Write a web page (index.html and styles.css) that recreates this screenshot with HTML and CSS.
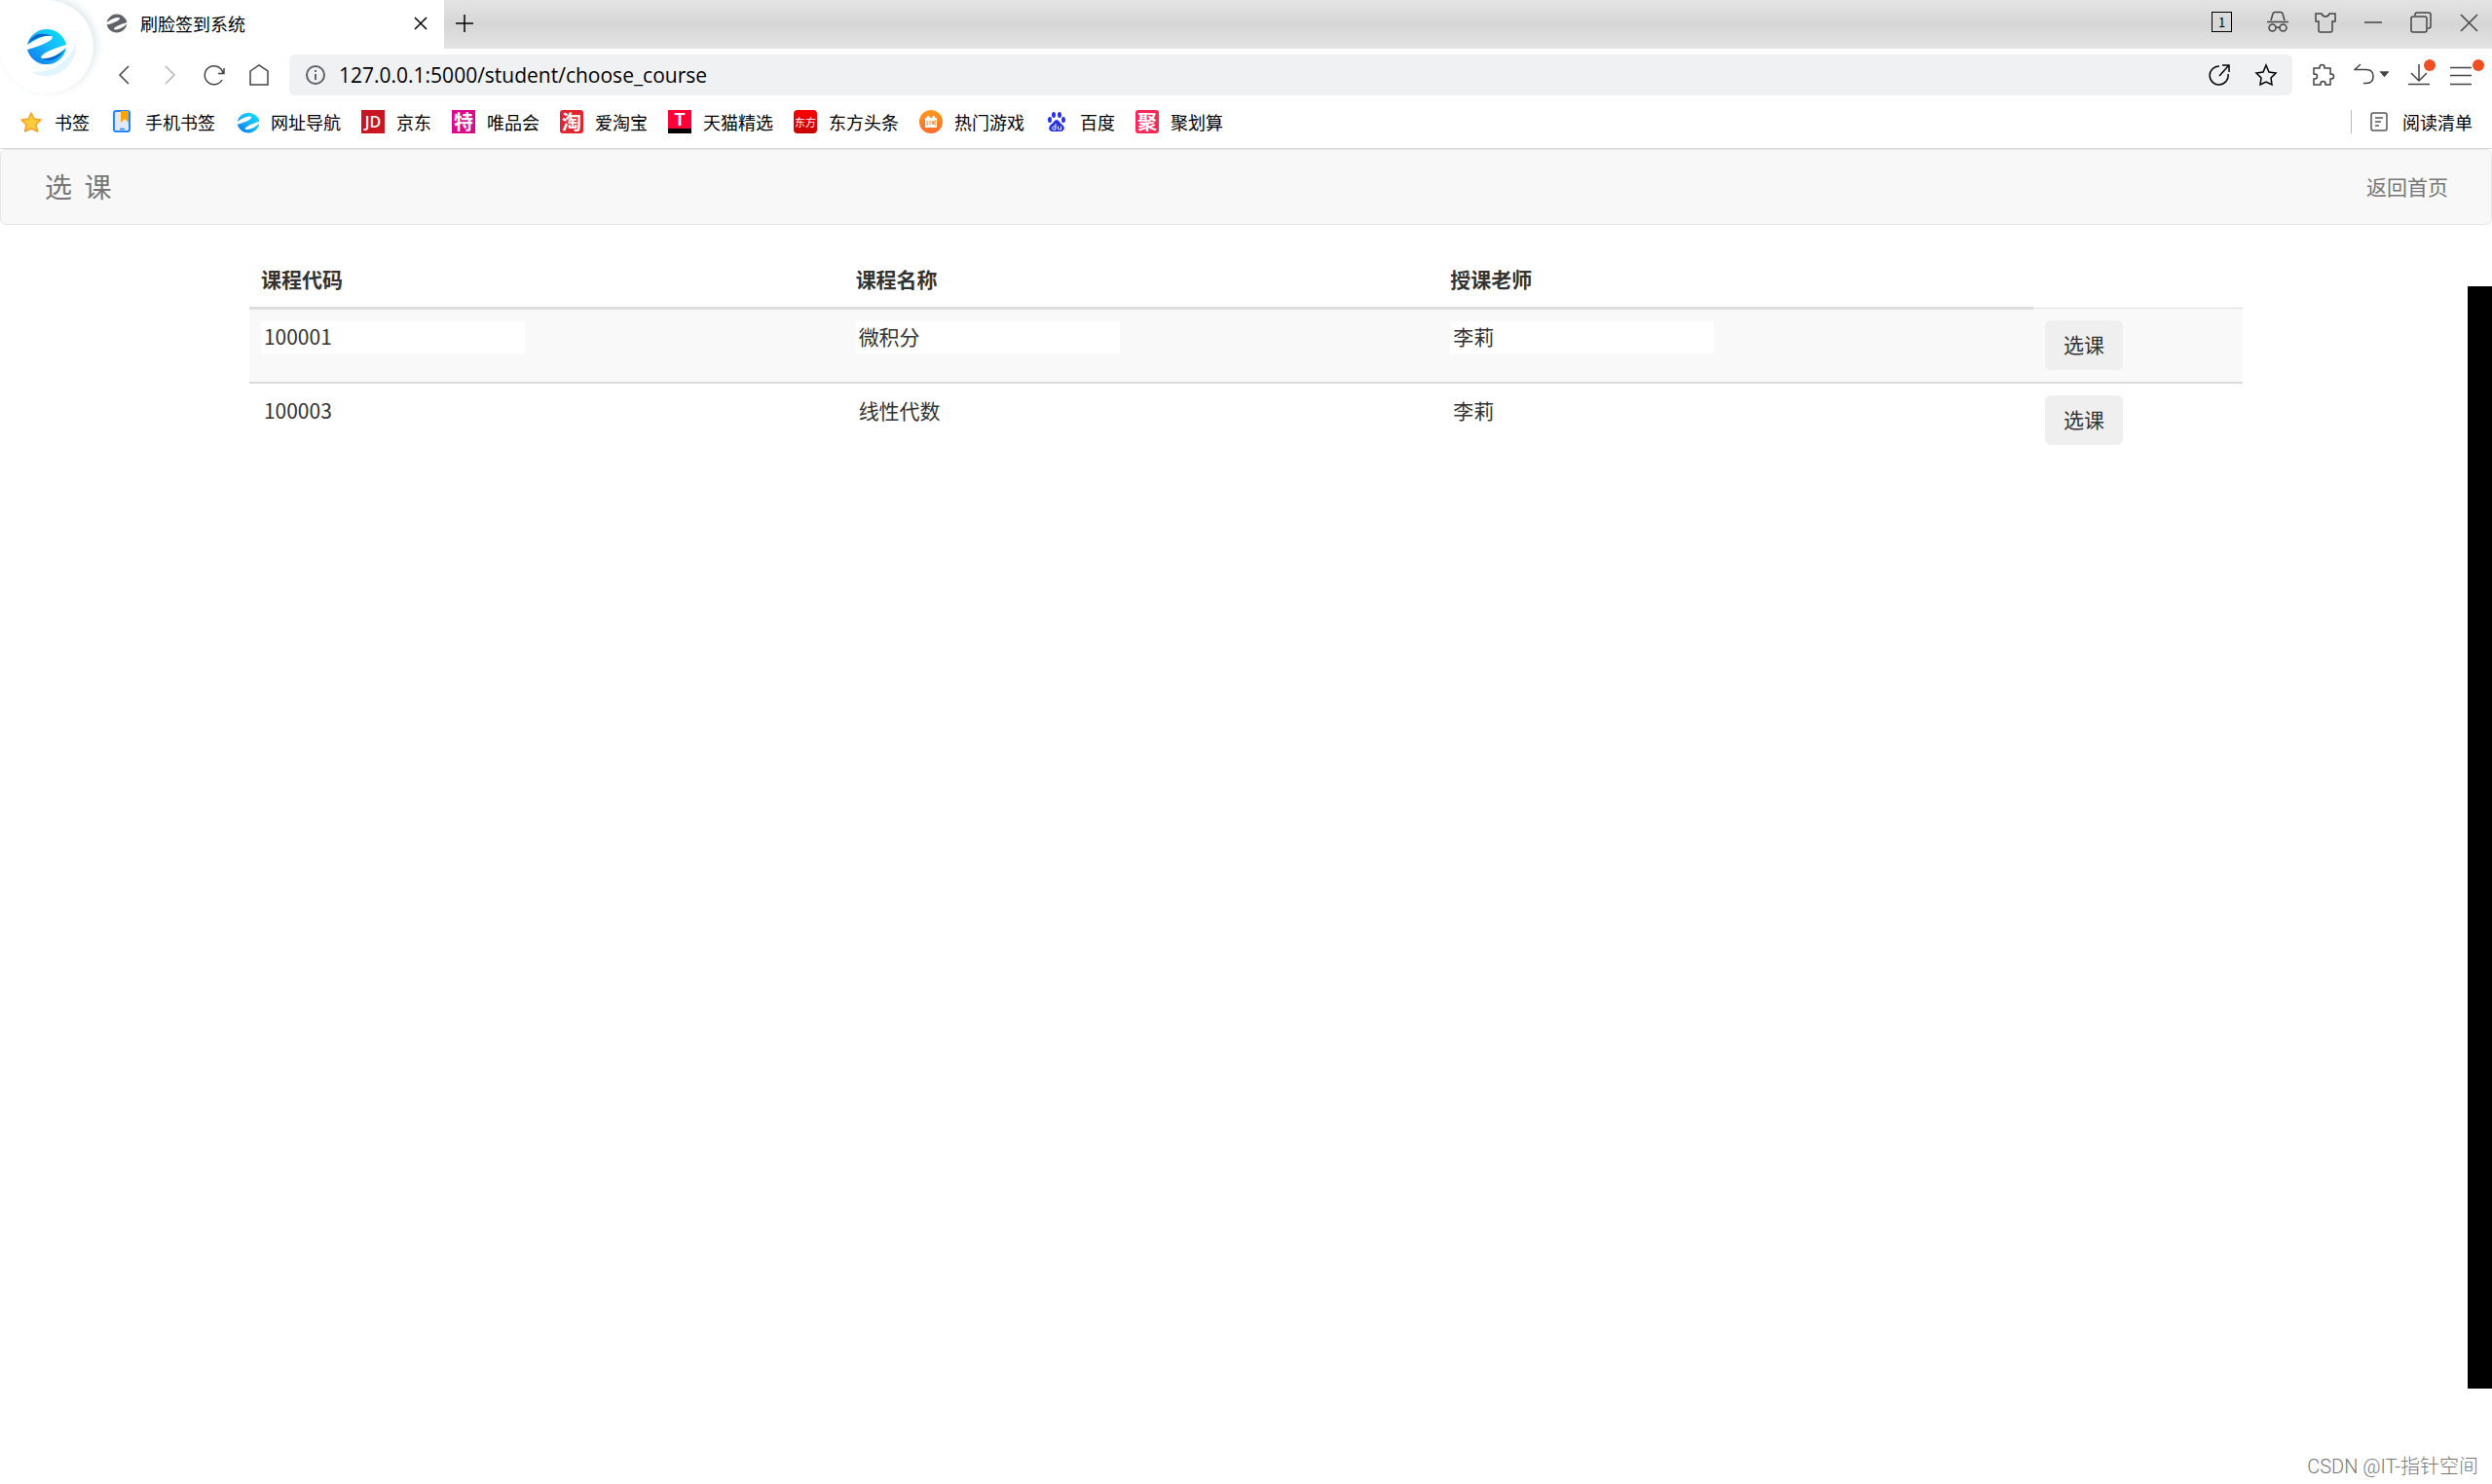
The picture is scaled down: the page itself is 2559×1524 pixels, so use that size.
FILE: index.html
```html
<!DOCTYPE html>
<html lang="zh-CN">
<head>
    <meta charset="UTF-8">
    <title>刷脸签到系统</title>
    <link rel="stylesheet" href="styles.css">
</head>
<body>
<svg class="defs" aria-hidden="true">
    <defs>
        <linearGradient id="blue" x1="1" y1="0" x2="0" y2="1">
            <stop offset="0" stop-color="#05e6ff"/>
            <stop offset="0.5" stop-color="#18b4fb"/>
            <stop offset="1" stop-color="#0872ea"/>
        </linearGradient>
        <linearGradient id="orange" x1="0" y1="0" x2="0" y2="1">
            <stop offset="0" stop-color="#ff9a1e"/>
            <stop offset="1" stop-color="#ff6a30"/>
        </linearGradient>
        <symbol id="logo" viewBox="0 0 42 42">
            <path d="M1 19A20.500 20.500 0 0 1 41 19Q27 23 20 27Q13 31 16 33Q26 35 41 22A20.500 20.500 0 0 1 1 24Q15 20 22 16Q29 12 26 10Q17 8 1 19z"/>
        </symbol>
    </defs>
</svg>
<header class="browser">
    <div class="tab-bar">
        <div class="tab">
            <svg class="tab-icon" viewBox="0 0 42 42"><use href="#logo"/></svg>
            <span class="tab-title">刷脸签到系统</span>
            <button class="icon-btn dark" aria-label="关闭标签"><svg width="14" height="14" viewBox="0 0 14 14"><path d="M1 1l12 12M13 1L1 13"/></svg></button>
        </div>
        <button class="icon-btn new-tab" aria-label="新标签"><svg width="20" height="20" viewBox="0 0 20 20"><path d="M10 1v18M1 10h18"/></svg></button>
        <div class="window-btns">
            <button class="icon-btn count" aria-label="标签数">1</button>
            <button class="icon-btn" aria-label="无痕"><svg width="24" height="24" viewBox="0 0 24 24"><path d="M1 11.500h22M5 10l2-7q.5-1.500 2-1.500h6q1.500 0 2 1.500l2 7M10 17.500q2-1 4 0"/><circle cx="6.500" cy="17.500" r="3.500"/><circle cx="17.500" cy="17.500" r="3.500"/></svg></button>
            <button class="icon-btn" aria-label="皮肤"><svg width="24" height="24" viewBox="0 0 24 24"><path d="M2 3h6q1 3 4 3t4-3h6v8h-3v9q0 2-2 2H7q-2 0-2-2v-9H2z"/></svg></button>
            <button class="icon-btn" aria-label="最小化"><svg width="24" height="24" viewBox="0 0 24 24"><path d="M3 12h18"/></svg></button>
            <button class="icon-btn" aria-label="还原"><svg width="24" height="24" viewBox="0 0 24 24"><rect x="2" y="6" width="16" height="16" rx="2"/><path d="M6 5V4q0-2 2-2h12q2 0 2 2v12q0 2-2 2h-1"/></svg></button>
            <button class="icon-btn" aria-label="关闭"><svg width="24" height="24" viewBox="0 0 24 24"><path d="M4 4l17 17M21 4L4 21"/></svg></button>
        </div>
    </div>
    <div class="toolbar">
        <button class="icon-btn" aria-label="后退"><svg width="24" height="24" viewBox="0 0 24 24"><path d="M16 3l-9 9 9 9"/></svg></button>
        <button class="icon-btn disabled" aria-label="前进"><svg width="24" height="24" viewBox="0 0 24 24"><path d="M8 3l9 9-9 9"/></svg></button>
        <button class="icon-btn" aria-label="刷新"><svg width="24" height="24" viewBox="0 0 24 24"><path d="M20 17a9.500 9.500 0 1 1 1-7M22 5v5.500h-6"/></svg></button>
        <button class="icon-btn" aria-label="主页"><svg width="24" height="24" viewBox="0 0 24 24"><path d="M3 8l9-6 9 6v14H3z"/></svg></button>
        <div class="address">
            <svg class="info" width="22" height="22" viewBox="0 0 22 22"><circle cx="11" cy="11" r="9"/><path d="M11 6v2M11 10v6"/></svg>
            <input class="url" type="text" aria-label="地址" value="127.0.0.1:5000/student/choose_course">
            <button class="icon-btn dark" aria-label="分享"><svg width="24" height="24" viewBox="0 0 24 24"><path d="M12 3a9.500 9.500 0 1 0 9 8M12 13l9-10M15 2h7v7"/></svg></button>
            <button class="icon-btn dark" aria-label="收藏"><svg width="24" height="24" viewBox="0 0 24 24"><path d="M12 2l3 7 7 1-5 5 1 7-6-3-6 3 1-7-5-5 7-1z"/></svg></button>
        </div>
        <div class="tools">
            <button class="icon-btn" aria-label="扩展"><svg width="24" height="24" viewBox="0 0 24 24"><path d="M2 5h6v-1q0-2.500 2.500-2.500T13 4v1h6v6h1q2.500 0 2.500 2.500T20 16h-1v6h-5v-1q0-2.500-2.500-2.500T9 21v1H2v-6h1q2.500 0 2.500-2.500T3 11H2z"/></svg></button>
            <button class="icon-btn" aria-label="撤销"><svg width="36" height="24" viewBox="0 0 36 24"><path d="M7 1L1 6.500h12q7 0 7 7t-7 7h-3"/><path class="solid" d="M28 9h7l-3.500 4z"/></svg></button>
            <button class="icon-btn dot" aria-label="下载"><svg width="24" height="24" viewBox="0 0 24 24"><path d="M12 1v17M4 10l8 8 8-8M1 21.500h22"/></svg></button>
            <button class="icon-btn dot menu" aria-label="菜单"><svg width="24" height="24" viewBox="0 0 24 24"><path d="M1 4.500h22M1 12.500h22M1 21.500h22"/></svg></button>
        </div>
    </div>
    <nav class="bookmarks">
        <a href="#"><svg class="mark" viewBox="0 0 24 24"><path fill="#ffcb3d" stroke="#f9a02b" stroke-width="1.500" stroke-linejoin="round" d="M12 3l3 6 7 1-5 5 1.500 7L12 19l-6.500 3L7 15l-5-5 7-1z"/></svg>书签</a>
        <a href="#"><svg class="mark" viewBox="0 0 24 24"><rect x="4" y="1" width="16" height="21" rx="2" fill="#dfe9fb" stroke="#2486fb" stroke-width="2"/><path fill="#ffa400" d="M11 1h8v12l-4-4-4 4z"/><path stroke="#2486fb" stroke-width="1.500" d="M10 19.500h5"/></svg>手机书签</a>
        <a href="#"><svg class="mark" viewBox="-2 -2 46 46" fill="url(#blue)"><use href="#logo"/></svg>网址导航</a>
        <a href="#"><span class="mark jd">JD</span>京东</a>
        <a href="#"><span class="mark te">特</span>唯品会</a>
        <a href="#"><span class="mark tao">淘</span>爱淘宝</a>
        <a href="#"><span class="mark tmall">T</span>天猫精选</a>
        <a href="#"><span class="mark east">东方</span>东方头条</a>
        <a href="#"><svg class="mark" viewBox="0 0 24 24"><circle cx="12" cy="12" r="12" fill="url(#orange)"/><path fill="#fff" d="M6 8h2V6h2l1 2h2l1-2h2v2h2v10H6z"/><path fill="none" stroke="#ff8426" d="M8 11v4h1M11 11v4M13 11l1 4 1-4M17 11h-1v4h1"/></svg>热门游戏</a>
        <a href="#"><svg class="mark" viewBox="0 0 24 24" fill="#2932e1"><ellipse cx="9" cy="5" rx="2" ry="3"/><ellipse cx="15" cy="5" rx="2" ry="3"/><ellipse cx="5" cy="10" rx="2" ry="3"/><ellipse cx="19" cy="10" rx="2" ry="3"/><path d="M12 10c2 0 3 3 6 5 3 3 2 7-2 7H8c-4 0-5-4-2-7 3-2 4-5 6-5z"/><path fill="none" stroke="#fff" d="M11 14v6H9q-1.500 0-1.500-1.500T9 17h2M13.500 16.500V19q0 1 1 1h2v-3.500"/></svg>百度</a>
        <a href="#"><span class="mark ju">聚</span>聚划算</a>
        <a class="reading" href="#"><svg class="mark" viewBox="0 0 24 24" fill="none" stroke="#555" stroke-width="1.500"><rect x="4" y="3" width="16" height="18" rx="2"/><path d="M8 8h8M8 12h6M8 16h4"/></svg>阅读清单</a>
    </nav>
    <div class="badge">
        <svg width="54" height="54" viewBox="0 0 54 54">
            <path fill="#e0f6ff" d="M51 18A31 31 0 0 1 5 47Q38 48 51 18z"/>
            <use href="#logo" width="42" height="42" fill="url(#blue)"/>
            <path fill="#0b62c4" d="M2 17Q10 3 26 10Q15 8 2 17zM40 24Q28 40 16 33Q28 34 40 24z"/>
        </svg>
    </div>
</header>

<nav class="navbar">
    <a class="brand" href="#">选&nbsp; 课</a>
    <a class="home" href="#">返回首页</a>
</nav>

<main class="container">
    <table class="table">
        <thead>
        <tr>
            <th>课程代码</th>
            <th>课程名称</th>
            <th>授课老师</th>
            <td class="last"></td>
        </tr>
        </thead>
        <tbody>
        <tr>
            <td><input type="text" aria-label="课程代码" value="100001"></td>
            <td><input type="text" aria-label="课程名称" value="微积分"></td>
            <td><input type="text" aria-label="授课老师" value="李莉"></td>
            <td><button class="btn">选课</button></td>
        </tr>
        <tr>
            <td><input type="text" aria-label="课程代码" value="100003"></td>
            <td><input type="text" aria-label="课程名称" value="线性代数"></td>
            <td><input type="text" aria-label="授课老师" value="李莉"></td>
            <td><button class="btn">选课</button></td>
        </tr>
        </tbody>
    </table>
</main>

<div class="side-bar"></div>
<footer class="watermark">CSDN @IT-指针空间</footer>
</body>
</html>
```

FILE: styles.css
```css
* {
    margin: 0;
    padding: 0;
    box-sizing: border-box;
}

body {
    position: relative;
    display: flex;
    flex-direction: column;
    min-height: 100vh;
    font-family: "Noto Sans CJK SC", sans-serif;
    font-size: 21px;
    line-height: 30px;
    color: #333;
    background-color: #fff;
}

a {
    color: inherit;
    text-decoration: none;
}

button,
input {
    font: inherit;
    color: inherit;
    border: 0;
}

.defs {
    position: absolute;
    width: 0;
    height: 0;
}

/* browser chrome */
.browser {
    position: relative;
    border-bottom: 1px solid #d9d9dc;
}

.icon-btn {
    display: flex;
    align-items: center;
    justify-content: center;
    color: #444;
    background: none;
}

.icon-btn svg {
    fill: none;
    stroke: currentColor;
    stroke-width: 1.5;
}

.icon-btn .solid {
    fill: currentColor;
}

.icon-btn.disabled {
    color: #b5b5b5;
}

.icon-btn.dark,
.icon-btn.count {
    color: #000;
}

.tab-bar {
    display: flex;
    align-items: center;
    height: 50px;
    background: linear-gradient(#e4e4e4, #d6d6d6 50%, #e4e4e4);
}

.tab {
    display: flex;
    align-items: center;
    width: 456px;
    height: 50px;
    padding: 0 17px 2px 109px;
    font-size: 18px;
    color: #000;
    background-color: #fff;
}

.tab-icon {
    width: 22px;
    height: 22px;
    margin-right: 13px;
    fill: #5f6368;
}

.tab-title {
    flex: 1;
}

.new-tab {
    margin-left: 11px;
    padding-bottom: 2px;
    color: #000;
}

.window-btns {
    display: flex;
    gap: 25px;
    margin-left: auto;
    padding: 0 12px 4px 0;
}

.count {
    width: 21px;
    height: 21px;
    margin: 1px 10px 0 0;
    border: 1px solid #000;
    font-size: 13px;
    line-height: 18px;
}

.toolbar {
    display: flex;
    align-items: center;
    gap: 22px;
    padding: 6px 8px 3px 116px;
}

.address {
    display: flex;
    align-items: center;
    flex: 1;
    height: 42px;
    margin: 0 -2px 0 -3px;
    padding: 0 15px 0 16px;
    gap: 24px;
    border-radius: 6px;
    background-color: #f0f1f3;
}

.info {
    fill: none;
    stroke: #5f6368;
    stroke-width: 2;
}

.url {
    flex: 1;
    margin-left: -11px;
    font-family: "Open Sans", "Noto Sans CJK SC", sans-serif;
    color: #000;
    background: none;
}

.tools {
    display: flex;
    gap: 19px;
    padding-right: 12px;
}

.dot {
    position: relative;
}

.dot::after {
    content: "";
    position: absolute;
    top: -4px;
    right: -5px;
    width: 12px;
    height: 12px;
    border-radius: 50%;
    background-color: #f04f23;
}

.menu::after {
    right: -12px;
}

.bookmarks {
    display: flex;
    align-items: center;
    gap: 21px;
    height: 51px;
    padding: 0 20px 3px;
    font-size: 18px;
    color: #000;
}

.bookmarks a {
    display: flex;
    align-items: center;
    gap: 12px;
}

.mark {
    width: 24px;
    height: 24px;
    line-height: 24px;
    text-align: center;
    color: #fff;
}

.jd {
    font-family: "Open Sans", sans-serif;
    font-weight: 600;
    font-size: 16px;
    background-color: #c81623;
}

.te {
    font-size: 20px;
    font-weight: bold;
    background-color: #db0a8c;
}

.tao {
    font-size: 20px;
    font-weight: bold;
    border-radius: 3px;
    background-color: #e02531;
}

.tmall {
    font-family: "Liberation Sans", sans-serif;
    font-weight: bold;
    line-height: 20px;
    background: linear-gradient(#ff0036 80%, #000 80%);
}

.east {
    font-size: 11px;
    border-radius: 4px;
    background: linear-gradient(#f00, #c80000);
}

.ju {
    font-size: 20px;
    font-weight: bold;
    border-radius: 3px;
    background-color: #fb2659;
}

.bookmarks .reading {
    margin-left: auto;
    padding-left: 16px;
    border-left: 1px solid #bbb;
    line-height: 24px;
}

.badge {
    position: absolute;
    top: 0;
    left: 0;
    width: 96px;
    height: 96px;
    padding: 27px 0 0 27px;
    border-radius: 0 50% 50% 50%;
    box-shadow: 3px -2px 8px #dde8ee;
    background-color: #fff;
}

/* page */
.navbar {
    display: flex;
    align-items: center;
    justify-content: space-between;
    height: 78px;
    padding: 0 44px 3px 45px;
    border: 1px solid #e7e7e7;
    border-radius: 6px;
    color: #777;
    background-color: #f8f8f8;
}

.brand {
    font-size: 28px;
}

.container {
    padding: 30px 10% 0;
}

.table {
    width: 100%;
    table-layout: fixed;
    border-collapse: collapse;
}

.table th,
.table td {
    padding: 12px;
    text-align: left;
    vertical-align: top;
}

.table th {
    padding: 10px 12px 14px;
    border-bottom: 3px solid #ddd;
}

.table .last {
    width: 215px;
}

.table tbody td {
    border-top: 1px solid #ddd;
}

.table tbody tr + tr td {
    border-top: 2px solid #ddd;
}

.table tbody tr:nth-child(odd) {
    background-color: #f9f9f9;
}

.table input {
    display: block;
    width: 271px;
    height: 33px;
    padding: 0 3px 3px;
    background-color: #fff;
}

.btn {
    display: block;
    padding: 9px 19px 12px;
    border-radius: 6px;
    background-color: #efefef;
}

.side-bar {
    position: absolute;
    top: 294px;
    right: 0;
    bottom: 98px;
    width: 25px;
    background-color: #000;
}

.watermark {
    margin-top: auto;
    padding: 0 14px 3px;
    font-family: Roboto, "Noto Sans CJK SC", sans-serif;
    font-size: 20px;
    font-weight: 300;
    text-align: right;
    color: #777;
}
```
